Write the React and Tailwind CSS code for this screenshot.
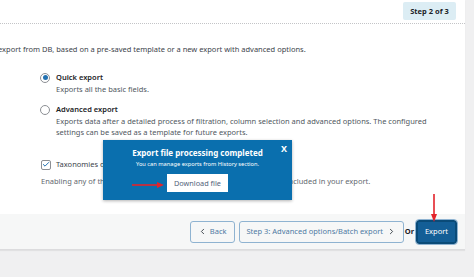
import React from "react";
import { ChevronLeft, ChevronRight, Check } from "lucide-react";

// Red annotation arrow (horizontal or vertical)
const RedArrow = ({ dir = "right", className = "" }) =>
  dir === "right" ? (
    <svg viewBox="0 0 32 6" className={className}>
      <line x1="0" y1="3" x2="27" y2="3" stroke="#e3232b" strokeWidth="1.6" />
      <polygon points="25,0 32,3 25,6" fill="#e3232b" />
    </svg>
  ) : (
    <svg viewBox="0 0 6 28" className={className}>
      <line x1="3" y1="0" x2="3" y2="22" stroke="#e3232b" strokeWidth="1.6" />
      <polygon points="0,20 3,28 6,20" fill="#e3232b" />
    </svg>
  );

const Radio = ({ checked }) => (
  <span className="w-[10px] h-[10px] rounded-full border border-[#8c8f94] bg-white flex items-center justify-center shrink-0">
    {checked && <span className="w-[5px] h-[5px] rounded-full bg-[#2271b1]" />}
  </span>
);

const Option = ({ checked, title, children }) => (
  <div>
    <div className="flex items-center gap-[6px]">
      <Radio checked={checked} />
      <span className="font-semibold text-[#1d2327]">{title}</span>
    </div>
    <div className="pl-[16px] mt-[1px] text-[#50575e] whitespace-nowrap">{children}</div>
  </div>
);

export default function App() {
  return (
    <div
      className="w-[474px] h-[277px] bg-[#f0f0f1] overflow-hidden text-[7.5px] leading-[11px]"
      style={{ fontFamily: "'Noto Sans', 'Open Sans', sans-serif" }}
    >
      <div className="w-[465px] flex flex-col shadow-[0_1px_1px_rgba(0,0,0,0.06)]">
        {/* Main panel */}
        <div className="relative h-[214px] bg-white">
          <div className="h-[24px] border-b border-dotted border-[#c3c4c7] flex justify-end items-start pr-[9px] pt-[2px]">
            <div className="h-[18px] w-[53px] bg-[#dcedf4] rounded-[2px] flex items-center justify-center font-bold text-[#1d2327]">
              Step 2 of 3
            </div>
          </div>

          <p className="mt-[20px] ml-[-2px] text-[#3c434a] whitespace-nowrap">
            export from DB, based on a pre-saved template or a new export with advanced options.
          </p>

          <div className="pl-[40px] mt-[17px] flex flex-col gap-[9px]">
            <Option checked title="Quick export">
              Exports all the basic fields.
            </Option>
            <Option title="Advanced export">
              Exports data after a detailed process of filtration, column selection and advanced options. The configured
              <br />
              settings can be saved as a template for future exports.
            </Option>
          </div>

          <div className="pl-[41px] mt-[21px]">
            <div className="flex items-center gap-[5px]">
              <span className="w-[10px] h-[10px] border border-[#8c8f94] rounded-[2px] bg-white flex items-center justify-center">
                <Check className="w-[9px] h-[9px] text-[#2271b1]" strokeWidth={3} />
              </span>
              <span className="text-[#3c434a]">Taxonomies of the exported items</span>
            </div>
            <p className="mt-[6px] text-[#646970] whitespace-nowrap">
              Enabling any of these options will cause the related taxonomies to be included in your export.
            </p>
          </div>

          {/* Completion notice */}
          <div className="absolute left-[103px] top-[140px] w-[189px] h-[60px] bg-[#0a6fae] shadow-[0_1px_3px_rgba(0,0,0,0.3)] flex flex-col items-center pt-[7px]">
            <div className="font-bold text-white text-[8px] leading-[11px]">Export file processing completed</div>
            <div className="mt-[2px] text-white text-[5.7px] leading-[8px]">You can manage exports from History section.</div>
            <button className="mt-[6px] w-[61px] h-[18px] bg-white text-[#50627a] text-[7.3px] flex items-center justify-center">
              Download file
            </button>
            <span className="absolute right-[5px] top-[3px] text-white font-bold text-[9px]">X</span>
            <RedArrow className="absolute left-[29px] top-[42px] w-[32px] h-[6px]" />
          </div>

          <RedArrow dir="down" className="absolute left-[431px] top-[194px] w-[6px] h-[28px]" />
        </div>

        {/* Footer */}
        <div className="h-[36px] bg-[#f6f7f7] border-b border-[#dcdcde] flex items-center justify-end pr-[8px]">
          <button className="h-[22px] w-[45px] border border-[#8fb3d1] rounded-[3px] bg-[#f6f7f7] text-[#4f7aa3] flex items-center justify-center gap-[3px]">
            <ChevronLeft className="w-[9px] h-[9px] text-[#3c434a]" strokeWidth={2.5} />
            Back
          </button>
          <button className="ml-[4px] h-[22px] w-[165px] border border-[#8fb3d1] rounded-[3px] bg-[#f6f7f7] text-[#4f7aa3] flex items-center justify-center gap-[4px] whitespace-nowrap">
            Step 3: Advanced options/Batch export
            <ChevronRight className="w-[9px] h-[9px] text-[#3c434a]" strokeWidth={2.5} />
          </button>
          <span className="ml-[1px] font-bold text-[#1d2327]">Or</span>
          <button className="ml-[2px] h-[24px] w-[41px] border-2 border-[#0a4b78] rounded-[3px] bg-[#135e96] text-white outline outline-1 outline-[#8fb3d1] flex items-center justify-center">
            Export
          </button>
        </div>
      </div>
    </div>
  );
}
